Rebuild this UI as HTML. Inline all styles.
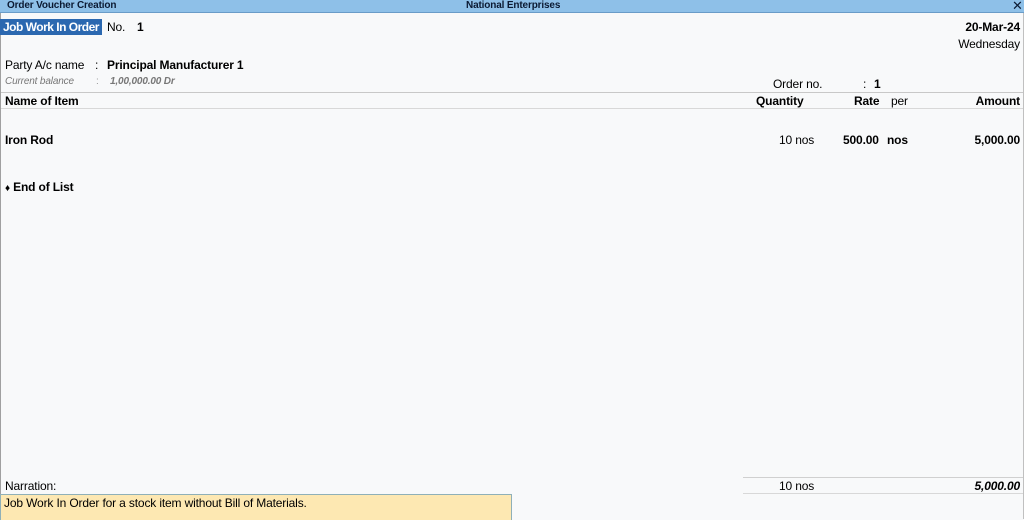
<!DOCTYPE html>
<html><head><style>
body{margin:0;width:1024px;height:519px;background:#f8f9fa;font-family:"Liberation Sans",Arial,sans-serif;font-size:12px;color:#000;position:relative;overflow:hidden;letter-spacing:-0.15px}
.a{position:absolute;white-space:nowrap}
</style></head><body>
<div class="a" style="left:0;top:0;width:1024px;height:12px;background:#8ec0e8;border-bottom:1px solid #6a9cc8"></div>
<div class="a" style="left:7px;top:0;font-size:10px;font-weight:bold;color:#0b1a33">Order Voucher Creation</div>
<div class="a" style="left:466px;top:0;font-size:10px;font-weight:bold;color:#0b1a33">National Enterprises</div>
<div class="a" style="left:1012px;top:-2px;font-size:13px;color:#0b1a33">✕</div>
<div class="a" style="left:0;top:13px;width:1px;height:506px;background:#a0a0a0"></div>
<div class="a" style="left:1023px;top:13px;width:1px;height:506px;background:#c0c0c0"></div>
<div class="a" style="left:0;top:19px;width:102px;height:16px;background:#2b68b0"></div>
<div class="a" style="left:3px;top:20px;color:#fff;font-weight:bold;letter-spacing:-0.5px">Job Work In Order</div>
<div class="a" style="left:107px;top:20px">No.</div>
<div class="a" style="left:137px;top:20px;font-weight:bold">1</div>
<div class="a" style="right:4px;top:20px;font-weight:bold">20-Mar-24</div>
<div class="a" style="right:4px;top:37px">Wednesday</div>
<div class="a" style="left:5px;top:58px">Party A/c name</div>
<div class="a" style="left:95px;top:58px">:</div>
<div class="a" style="left:107px;top:58px;font-weight:bold">Principal Manufacturer 1</div>
<div class="a" style="left:5px;top:76px;font-size:10px;font-style:italic;color:#777">Current balance</div>
<div class="a" style="left:96px;top:76px;font-size:10px;color:#999">:</div>
<div class="a" style="left:110px;top:76px;font-size:10px;font-style:italic;font-weight:bold;color:#777">1,00,000.00 Dr</div>
<div class="a" style="left:773px;top:77px">Order no.</div>
<div class="a" style="left:863px;top:77px">:</div>
<div class="a" style="left:874px;top:77px;font-weight:bold">1</div>
<div class="a" style="left:1px;top:92px;width:1022px;height:1px;background:#c8c8c8"></div>
<div class="a" style="left:5px;top:94px;font-weight:bold">Name of Item</div>
<div class="a" style="left:756px;top:94px;font-weight:bold">Quantity</div>
<div class="a" style="left:854px;top:94px;font-weight:bold">Rate</div>
<div class="a" style="left:891px;top:94px">per</div>
<div class="a" style="right:4px;top:94px;font-weight:bold">Amount</div>
<div class="a" style="left:1px;top:108px;width:1022px;height:1px;background:#d8d8d8"></div>
<div class="a" style="left:5px;top:133px;font-weight:bold">Iron Rod</div>
<div class="a" style="left:779px;top:133px">10 nos</div>
<div class="a" style="left:843px;top:133px;font-weight:bold">500.00</div>
<div class="a" style="left:887px;top:133px;font-weight:bold">nos</div>
<div class="a" style="right:4px;top:133px;font-weight:bold">5,000.00</div>
<div class="a" style="left:5px;top:180px;font-weight:bold"><span style="font-size:10px">♦</span> End of List</div>
<div class="a" style="left:5px;top:479px">Narration:</div>
<div class="a" style="left:743px;top:477px;width:280px;height:1px;background:#d0d0d0"></div>
<div class="a" style="left:779px;top:479px">10 nos</div>
<div class="a" style="right:4px;top:479px;font-weight:bold;font-style:italic">5,000.00</div>
<div class="a" style="left:743px;top:493px;width:280px;height:1px;background:#d8d8d8"></div>
<div class="a" style="left:0;top:494px;width:510px;height:25px;background:#fde8b2;border:1px solid #8fb0b8;border-bottom:none"></div>
<div class="a" style="left:4px;top:496px">Job Work In Order for a stock item without Bill of Materials.</div>
</body></html>
